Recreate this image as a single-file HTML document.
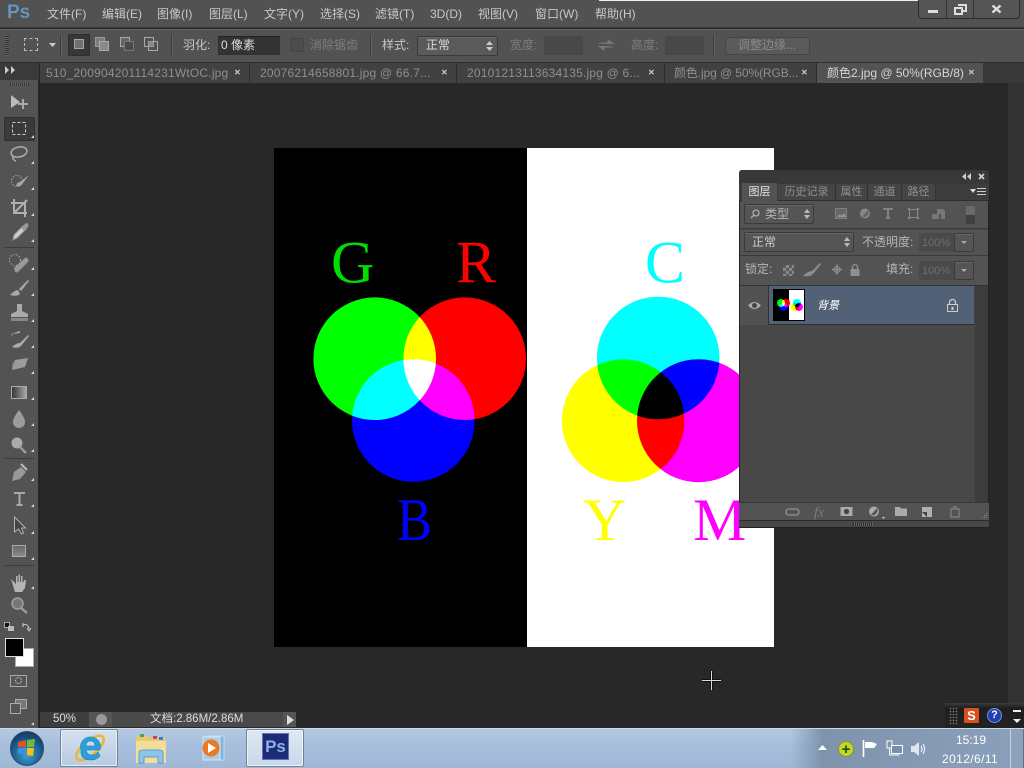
<!DOCTYPE html>
<html><head><meta charset="utf-8"><style>
html,body{margin:0;padding:0;width:1024px;height:768px;overflow:hidden;background:#282828}
*{box-sizing:border-box}
#r{position:relative;width:1024px;height:768px;overflow:hidden;font-family:"Liberation Sans","Noto Sans CJK SC",sans-serif;font-size:12px;color:#c8c8c8}
.a{position:absolute}
.t{position:absolute;white-space:nowrap;line-height:16px}
svg{position:absolute;overflow:visible}
.dim{color:#7d7d7d}
.sep{position:absolute;width:1px;background:#3c3c3c;border-right:1px solid #626262;width:2px}
.tab{position:absolute;top:63px;height:20px;background:#414141;border-right:1px solid #2c2c2c;color:#8f8f8f;line-height:21px;padding-left:6px;white-space:nowrap;font-size:12px;letter-spacing:.2px}
.x{position:absolute;top:-1px;font-size:8px;color:#ccc;font-weight:bold;letter-spacing:0}
.ptab{position:absolute;top:184px;height:16px;color:#8e8e8e;font-size:11px;line-height:16px;text-align:center;background:#454545;border-right:1px solid #333}
.sbox{position:absolute;background:#555;border:1px solid #3a3a3a;border-radius:2px;box-shadow:inset 0 1px 0 #666}
</style></head><body><div id="r">

<!-- title bar -->
<div class="a" style="left:0;top:0;width:1024px;height:28px;background:#525252;border-bottom:1px solid #383838"></div>
<div class="a" style="left:599px;top:0;width:320px;height:1px;background:#eee"></div>
<div class="t" style="left:7px;top:1px;font-size:19px;line-height:24px;font-weight:bold;color:#6a93b8">Ps</div>
<div class="t" style="left:47px;top:6px">文件(F)</div>
<div class="t" style="left:102px;top:6px">编辑(E)</div>
<div class="t" style="left:157px;top:6px">图像(I)</div>
<div class="t" style="left:209px;top:6px">图层(L)</div>
<div class="t" style="left:264px;top:6px">文字(Y)</div>
<div class="t" style="left:320px;top:6px">选择(S)</div>
<div class="t" style="left:375px;top:6px">滤镜(T)</div>
<div class="t" style="left:430px;top:6px">3D(D)</div>
<div class="t" style="left:478px;top:6px">视图(V)</div>
<div class="t" style="left:535px;top:6px">窗口(W)</div>
<div class="t" style="left:595px;top:6px">帮助(H)</div>
<!-- window btns -->
<div class="a" style="left:918px;top:-1px;width:102px;height:20px;background:#555;border:1px solid #2c2c2c;border-radius:0 0 4px 4px"></div>
<div class="a" style="left:946px;top:0;width:1px;height:18px;background:#333"></div>
<div class="a" style="left:973px;top:0;width:1px;height:18px;background:#333"></div>
<div class="a" style="left:928px;top:10px;width:10px;height:3px;background:#ddd"></div>
<svg style="left:954px;top:4px" width="14" height="11"><path d="M4 1h8v6H9M1 4h7v6H1z" fill="none" stroke="#ddd" stroke-width="2"/></svg>
<svg style="left:991px;top:4px" width="12" height="11"><path d="M1.500 1.500l8 7M9.500 1.500l-8 7" stroke="#ddd" stroke-width="2.400" fill="none"/></svg>

<!-- options bar -->
<div class="a" style="left:0;top:29px;width:1024px;height:34px;background:#525252;border-bottom:1px solid #2d2d2d;box-shadow:inset 0 1px 0 #606060"></div>
<div class="a" style="left:5px;top:36px;width:4px;height:20px;background:repeating-linear-gradient(#2f2f2f 0 1px,#666 1px 2px)"></div>
<div class="a" style="left:24px;top:38px;width:14px;height:13px;border:1px dashed #bbb"></div>
<svg style="left:49px;top:43px" width="7" height="4"><path d="M0 0h7L3.500 4z" fill="#ccc"/></svg>
<div class="sep" style="left:60px;top:35px;height:22px"></div>
<div class="a" style="left:68px;top:34px;width:22px;height:22px;background:#373737;border-radius:2px;box-shadow:inset 0 0 0 1px #2e2e2e"></div>
<div class="a" style="left:74px;top:39px;width:10px;height:10px;background:#707070;border:1px solid #a5a5a5"></div>
<svg style="left:95px;top:37px" width="16" height="15"><rect x=".5" y=".5" width="9" height="9" fill="#7c7c7c" stroke="#999"/><rect x="4.500" y="4.500" width="9" height="9" fill="#8a8a8a" stroke="#aaa"/></svg>
<svg style="left:120px;top:37px" width="16" height="15"><rect x=".5" y=".5" width="9" height="9" fill="#666" stroke="#aaa"/><rect x="4.500" y="4.500" width="9" height="9" fill="#4b4b4b" stroke="#777"/></svg>
<svg style="left:144px;top:37px" width="16" height="15"><rect x=".5" y=".5" width="9" height="9" fill="none" stroke="#aaa"/><rect x="4.500" y="4.500" width="9" height="9" fill="none" stroke="#aaa"/><rect x="4.500" y="4.500" width="5" height="5" fill="#888"/></svg>
<div class="sep" style="left:171px;top:35px;height:22px"></div>
<div class="t" style="left:183px;top:37px">羽化:</div>
<div class="a" style="left:218px;top:36px;width:62px;height:19px;background:#333;box-shadow:inset 0 1px 1px #222"></div>
<div class="t" style="left:221px;top:37px;color:#ddd">0 像素</div>
<div class="a" style="left:290px;top:38px;width:14px;height:14px;background:#4c4c4c;border:1px solid #444;border-radius:2px"></div>
<div class="t dim" style="left:310px;top:37px">消除锯齿</div>
<div class="sep" style="left:370px;top:35px;height:22px"></div>
<div class="t" style="left:382px;top:37px">样式:</div>
<div class="sbox" style="left:417px;top:36px;width:81px;height:20px;background:#5a5a5a"></div>
<div class="t" style="left:426px;top:37px;color:#ddd">正常</div>
<svg style="left:486px;top:41px" width="7" height="10"><path d="M0 4l3.500-4L7 4zM0 6l3.500 4L7 6z" fill="#ccc"/></svg>
<div class="t dim" style="left:510px;top:37px">宽度:</div>
<div class="a" style="left:544px;top:36px;width:39px;height:19px;background:#484848"></div>
<svg style="left:598px;top:38px" width="16" height="14"><path d="M1 5h9V2l5 3.500H5M15 9H6v3L1 8.500h10" fill="#777" stroke="#777"/></svg>
<div class="t dim" style="left:631px;top:37px">高度:</div>
<div class="a" style="left:665px;top:36px;width:39px;height:19px;background:#484848"></div>
<div class="sep" style="left:713px;top:35px;height:22px"></div>
<div class="a" style="left:725px;top:37px;width:85px;height:18px;background:#5a5a5a;border:1px solid #454545;border-radius:2px"></div>
<div class="t" style="left:738px;top:37px;color:#8a8a8a">调整边缘...</div>

<!-- tabs -->
<div class="a" style="left:40px;top:63px;width:984px;height:20px;background:#383838"></div>
<div class="tab" style="left:40px;width:210px">510_200904201114231WtOC.jpg<span class="x" style="left:194px">✕</span></div>
<div class="tab" style="left:250px;width:207px;padding-left:10px">20076214658801.jpg @ 66.7...<span class="x" style="left:191px">✕</span></div>
<div class="tab" style="left:457px;width:208px;padding-left:10px">20101213113634135.jpg @ 6...<span class="x" style="left:191px">✕</span></div>
<div class="tab" style="left:665px;width:152px;padding-left:9px;letter-spacing:-.1px">颜色.jpg @ 50%(RGB...<span class="x" style="left:136px">✕</span></div>
<div class="tab" style="left:817px;width:166px;background:#535353;color:#d6d6d6;padding-left:10px;border-right:0;letter-spacing:0">颜色2.jpg @ 50%(RGB/8)<span class="x" style="left:151px">✕</span></div>

<!-- right strip -->
<div class="a" style="left:1007px;top:83px;width:17px;height:628px;background:#333;border-left:1px solid #2a2a2a"></div>

<!-- toolbar -->
<div class="a" style="left:0;top:63px;width:39px;height:17px;background:#3a3a3a"></div>
<svg style="left:5px;top:66px" width="12" height="8"><path d="M0 0l4 4-4 4zM6 0l4 4-4 4z" fill="#ccc"/></svg>
<div class="a" style="left:0;top:80px;width:39px;height:648px;background:#535353;border-right:1px solid #2b2b2b"></div>
<div class="a" style="left:39px;top:63px;width:1px;height:665px;background:#222"></div>
<div class="a" style="left:10px;top:80px;width:19px;height:3px;margin-top:3px;background:repeating-linear-gradient(90deg,#333 0 1px,#666 1px 2px)"></div>
<div class="a" style="left:4px;top:117px;width:31px;height:24px;background:#3a3a3a;border-radius:2px;box-shadow:inset 0 0 0 1px #303030"></div>

<svg style="left:0;top:0" width="40" height="730">
<!-- move -->
<path d="M11 95l9 7-9 6z" fill="#bbb"/><path d="M23 99v10M18 104h10" stroke="#aaa" stroke-width="2"/>
<!-- marquee -->
<rect x="12.500" y="122.500" width="13" height="12" fill="none" stroke="#c8c8c8" stroke-dasharray="3 2"/>
<!-- lasso -->
<ellipse cx="19" cy="152" rx="8" ry="5" transform="rotate(-12 19 152)" fill="none" stroke="#adadad" stroke-width="1.500"/><path d="M13 156q-1 4 3 5" fill="none" stroke="#adadad" stroke-width="1.500"/>
<!-- quick select -->
<circle cx="17" cy="181" r="5.500" fill="none" stroke="#aaa" stroke-dasharray="1.500 1.500"/><path d="M29 175l-9 7q-3 0-4 4 5 1 7-3z" fill="#a8a8a8"/>
<!-- crop -->
<path d="M14 199v14h13M11 203h14v14M27 200l-13 13" fill="none" stroke="#b0b0b0" stroke-width="2"/>
<!-- eyedropper -->
<path d="M14 235l9-9 3 3-9 9-4 2z" fill="#ccc" stroke="#999"/><path d="M21 228l4-4q2-2 3 0t0 3l-4 4z" fill="#999"/>
<line x1="5" x2="34" y1="247.500" y2="247.500" stroke="#3c3c3c"/>
<!-- healing -->
<circle cx="15" cy="260" r="5.500" fill="none" stroke="#aaa" stroke-dasharray="1.500 1.500"/><path d="M14 268l12-11 2 2q1 1 0 3l-10 10q-2 1-3 0z" fill="#999"/>
<!-- brush -->
<path d="M28 280l-9 9 2 2 8-10zM18 290q-3 0-8 5 7 2 10-1z" fill="#aaa"/>
<!-- stamp -->
<path d="M17 304h5v7l6 3v3H11v-3l6-3z" fill="#aaa"/><rect x="11" y="318" width="17" height="3" fill="#888"/>
<!-- history brush -->
<path d="M12 334l8-1v-2l-9 3 3 4zM28 335l-8 8q-4 0-8 4 6 2 9-1l8-10z" fill="#aaa"/>
<!-- eraser -->
<path d="M15 360l13-2-3 9-13 3z" fill="#9c9c9c"/><path d="M12 370l3-10-3 4z" fill="#808080"/>
<!-- gradient -->
<defs><linearGradient id="g1"><stop offset="0" stop-color="#333"/><stop offset="1" stop-color="#aaa"/></linearGradient><linearGradient id="g2" x2="0" y2="1"><stop offset="0" stop-color="#666"/><stop offset="1" stop-color="#8c8c8c"/></linearGradient></defs>
<rect x="11.500" y="386.500" width="15" height="12" fill="url(#g1)" stroke="#aaa"/>
<!-- drop -->
<path d="M19 410q6 8 6 12a6 6 0 0 1-12 0q0-4 6-12z" fill="#9c9c9c"/>
<!-- dodge -->
<circle cx="17" cy="443" r="5.500" fill="#aaa"/><path d="M20 447l6 6" stroke="#999" stroke-width="2.500"/>
<line x1="5" x2="34" y1="458.500" y2="458.500" stroke="#3c3c3c"/>
<!-- pen -->
<path d="M12 481l2-9 7-5 5 5-6 7z" fill="#999"/><path d="M21 464l6 6" stroke="#bbb" stroke-width="2"/>
<!-- T -->
<path d="M14 493h11M19.500 493v12M16.500 505h6" stroke="#aaa" stroke-width="2" fill="none"/>
<!-- direct select -->
<path d="M14.500 517v15l4-3 3 5 2-1-2-5h4z" fill="#444" stroke="#b4b4b4"/>
<!-- rect -->
<rect x="12.500" y="545.500" width="13" height="11" fill="url(#g2)" stroke="#aaa"/>
<line x1="5" x2="34" y1="565.500" y2="565.500" stroke="#3c3c3c"/>
<!-- hand -->
<path d="M11 579l5 5v-8h1.500v6h1v-7.500H20v7.500h1v-6h1.500v7l2-3h1.500l-1 8-3 4H15z" fill="#b4b4b4"/>
<!-- zoom -->
<circle cx="17.500" cy="603.500" r="5.500" fill="#777" stroke="#a0a0a0" stroke-width="1.500"/><path d="M21 608l6 5" stroke="#999" stroke-width="2.500"/>
</svg>
<!-- little triangles -->
<svg style="left:0;top:0" width="40" height="730"><g fill="#ddd">
<path d="M31 138h3v-3zM31 164h3v-3zM31 190h3v-3zM31 216h3v-3zM31 242h3v-3zM31 270h3v-3zM31 296h3v-3zM31 322h3v-3zM31 348h3v-3zM31 374h3v-3zM31 400h3v-3zM31 426h3v-3zM31 452h3v-3zM31 481h3v-3zM31 507h3v-3zM31 534h3v-3zM31 560h3v-3zM31 589h3v-3zM31 725h3v-3z"/></g>
<rect x="4.500" y="622.500" width="5" height="5" fill="#111" stroke="#aaa"/><rect x="8" y="626" width="6" height="5" fill="#bbb"/>
<path d="M23 625q5-2 6 4M23 623v4M27 628l2 3 2-3" fill="none" stroke="#ccc"/>
</svg>
<div class="a" style="left:15px;top:648px;width:19px;height:19px;background:#fff;border:1px solid #aaa"></div>
<div class="a" style="left:5px;top:638px;width:19px;height:19px;background:#000;border:1px solid #ddd"></div>
<div class="a" style="left:10px;top:675px;width:17px;height:12px;background:#555;border:1px solid #aaa"></div>
<div class="a" style="left:15px;top:677px;width:7px;height:7px;border:1px dotted #ddd;border-radius:50%"></div>
<svg style="left:0;top:0" width="40" height="730"><rect x="15.500" y="699.500" width="11" height="9" fill="#777" stroke="#aaa"/><rect x="10.500" y="703.500" width="10" height="10" fill="#555" stroke="#aaa"/></svg>

<!-- canvas image -->
<div class="a" style="left:274px;top:148px;width:253px;height:499px;background:#000"></div>
<div class="a" style="left:527px;top:148px;width:247px;height:499px;background:#fff"></div>
<svg style="left:0;top:0" width="1024" height="768">
<g style="isolation:isolate">
<circle cx="374.700" cy="358.700" r="61.300" fill="#0f0" style="mix-blend-mode:screen"/>
<circle cx="464.700" cy="358.700" r="61.300" fill="#f00" style="mix-blend-mode:screen"/>
<circle cx="413.300" cy="420.500" r="61.300" fill="#00f" style="mix-blend-mode:screen"/>
</g>
<g style="isolation:isolate">
<circle cx="658.200" cy="358" r="61.300" fill="#0ff" style="mix-blend-mode:multiply"/>
<circle cx="623.200" cy="420.700" r="61.300" fill="#ff0" style="mix-blend-mode:multiply"/>
<circle cx="698.500" cy="420.700" r="61.500" fill="#f0f" style="mix-blend-mode:multiply"/>
</g>
<g font-family="Liberation Serif,serif" font-size="60">
<text x="331" y="282.500" fill="#0d0">G</text>
<text x="456" y="282.500" fill="#f00">R</text>
<text x="397" y="540" fill="#00f" textLength="35" lengthAdjust="spacingAndGlyphs">B</text>
<text x="645" y="282.500" fill="#0ff">C</text>
<text x="583" y="540" fill="#ff0">Y</text>
<text x="693" y="540" fill="#f0f">M</text>
</g>
</svg>

<!-- layers panel -->
<div class="a" style="left:739px;top:170px;width:250px;height:358px;background:#474747;border:1px solid #222;border-top:0;border-radius:3px 3px 0 0"></div>
<div class="a" style="left:739px;top:170px;width:250px;height:14px;background:#383838;border-radius:3px 3px 0 0"></div>
<svg style="left:961px;top:173px" width="26" height="8"><path d="M5 0v7L1 3.500zM10 0v7L6 3.500z" fill="#ccc"/><path d="M18 1l5 5M23 1l-5 5" stroke="#ccc" stroke-width="1.800"/></svg>
<div class="a" style="left:739px;top:184px;width:250px;height:17px;background:#3d3d3d;border-bottom:1px solid #2e2e2e"></div>
<div class="ptab" style="left:742px;width:35px;top:183px;height:18px;background:#535353;color:#e4e4e4;line-height:18px;border:0">图层</div>
<div class="ptab" style="left:778px;width:58px">历史记录</div>
<div class="ptab" style="left:836px;width:32px">属性</div>
<div class="ptab" style="left:868px;width:34px">通道</div>
<div class="ptab" style="left:902px;width:34px">路径</div>
<svg style="left:970px;top:187px" width="16" height="9"><path d="M0 2h6L3 6z" fill="#ddd"/><path d="M7 1.500h9M7 4.500h9M7 7.500h9" stroke="#ccc"/></svg>
<!-- filter row -->
<div class="a" style="left:740px;top:201px;width:248px;height:28px;background:#535353;border-bottom:1px solid #3a3a3a"></div>
<div class="sbox" style="left:744px;top:204px;width:70px;height:20px"></div>
<svg style="left:750px;top:209px" width="10" height="10"><circle cx="6" cy="4" r="3" fill="none" stroke="#aaa" stroke-width="1.300"/><path d="M4 6L1 9" stroke="#aaa" stroke-width="1.300"/></svg>
<div class="t" style="left:765px;top:206px;color:#b5b5b5">类型</div>
<svg style="left:804px;top:209px" width="6" height="10"><path d="M0 4l3-4 3 4zM0 6l3 4 3-4z" fill="#bbb"/></svg>
<svg style="left:835px;top:207px" width="150" height="18">
<rect x=".5" y="1.500" width="11" height="10" fill="#666" stroke="#808080"/><path d="M2 10l3-3 2 2 2-3 2 4z" fill="#999"/>
<circle cx="30" cy="6.500" r="5" fill="#888"/><path d="M27 10l6-7a5 5 0 0 1-6 7z" fill="#666"/>
<path d="M48 2h10M53 2v9M51 11h4" stroke="#888" stroke-width="1.800" fill="none"/>
<rect x="74.500" y="2.500" width="8" height="8" fill="none" stroke="#888"/><path d="M73 1h2v2h-2zM82 1h2v2h-2zM73 10h2v2h-2zM82 10h2v2h-2z" fill="#888"/>
<path d="M102 2h6l2 2v8h-4V7h-4zM97 7h7v5h-7z" fill="#777"/>
<rect x="131" y="-1" width="9" height="9" fill="#6a6a6a"/><rect x="131" y="8" width="9" height="9" fill="#3f3f3f"/>
</svg>
<!-- blend row -->
<div class="a" style="left:740px;top:230px;width:248px;height:26px;background:#535353;border-bottom:1px solid #3a3a3a"></div>
<div class="sbox" style="left:744px;top:232px;width:110px;height:20px"></div>
<div class="t" style="left:752px;top:234px;color:#ccc">正常</div>
<svg style="left:844px;top:237px" width="6" height="10"><path d="M0 4l3-4 3 4zM0 6l3 4 3-4z" fill="#bbb"/></svg>
<div class="t" style="left:862px;top:234px;color:#b5b5b5">不透明度:</div>
<div class="a" style="left:919px;top:233px;width:35px;height:19px;background:#4a4a4a"></div>
<div class="t" style="left:922px;top:235px;font-size:11px;color:#6e6e6e">100%</div>
<div class="sbox" style="left:954px;top:233px;width:20px;height:19px"></div>
<svg style="left:961px;top:241px" width="6" height="3"><path d="M0 0h6L3 3z" fill="#aaa"/></svg>
<!-- lock row -->
<div class="a" style="left:740px;top:256px;width:248px;height:30px;background:#535353;border-bottom:1px solid #333"></div>
<div class="t" style="left:745px;top:261px;color:#b5b5b5">锁定:</div>
<div class="a" style="left:783px;top:265px;width:11px;height:11px;background:repeating-conic-gradient(#888 0 25%,#5c5c5c 0 50%) 0 0/6px 6px"></div>
<svg style="left:803px;top:262px" width="60" height="16"><path d="M17 1l-8 8q-4 0-9 5 7 1 10-2l8-10z" fill="#8f8f8f"/><path d="M29 7.500h10M34 2.500v10" stroke="#8f8f8f" stroke-width="1.600"/><circle cx="34" cy="7.500" r="3" fill="none" stroke="#8f8f8f"/><rect x="47.500" y="7" width="9" height="7" fill="#8f8f8f"/><path d="M49.500 7V5a2.500 2.500 0 0 1 5 0v2" fill="none" stroke="#8f8f8f" stroke-width="1.300"/></svg>
<div class="t" style="left:886px;top:261px;color:#b5b5b5">填充:</div>
<div class="a" style="left:919px;top:261px;width:35px;height:19px;background:#4a4a4a"></div>
<div class="t" style="left:922px;top:263px;font-size:11px;color:#6e6e6e">100%</div>
<div class="sbox" style="left:954px;top:261px;width:20px;height:19px"></div>
<svg style="left:961px;top:269px" width="6" height="3"><path d="M0 0h6L3 3z" fill="#aaa"/></svg>
<!-- layer -->
<div class="a" style="left:740px;top:286px;width:234px;height:39px;background:#536176;border-bottom:1px solid #2f2f2f"></div>
<div class="a" style="left:740px;top:286px;width:29px;height:39px;background:#525252;border-right:1px solid #333"></div>
<div class="a" style="left:740px;top:325px;width:234px;height:177px;background:#484848"></div>
<div class="a" style="left:975px;top:286px;width:13px;height:216px;background:#3c3c3c"></div>
<svg style="left:748px;top:300px" width="14" height="11"><path d="M0 5.500q6.500-7 13 0-6.500 7-13 0z" fill="#aaa"/><circle cx="6.500" cy="5.500" r="2.500" fill="#444"/></svg>
<div class="a" style="left:773px;top:289px;width:32px;height:32px;background:#000;border:1px solid #000"></div>
<div class="a" style="left:789px;top:290px;width:15px;height:30px;background:#fff"></div>
<svg style="left:773px;top:289px" width="32" height="32"><g style="isolation:isolate"><circle cx="8" cy="14" r="4" fill="#0f0" style="mix-blend-mode:screen"/><circle cx="13" cy="14" r="4" fill="#f00" style="mix-blend-mode:screen"/><circle cx="10.500" cy="18" r="4" fill="#00f" style="mix-blend-mode:screen"/></g><g style="isolation:isolate"><circle cx="24" cy="14" r="4" fill="#0ff" style="mix-blend-mode:multiply"/><circle cx="22" cy="18" r="4" fill="#ff0" style="mix-blend-mode:multiply"/><circle cx="26" cy="18" r="4" fill="#f0f" style="mix-blend-mode:multiply"/></g></svg>
<div class="t" style="left:817px;top:298px;font-size:11px;color:#fff;font-style:italic">背景</div>
<svg style="left:947px;top:299px" width="11" height="13"><rect x=".5" y="5.500" width="10" height="7" fill="none" stroke="#ccc"/><path d="M2.500 5V3.500a3 3 0 0 1 6 0V5" fill="none" stroke="#ccc" stroke-width="1.300"/><rect x="4.500" y="8" width="2" height="3" fill="#ccc"/></svg>
<!-- panel bottom -->
<div class="a" style="left:739px;top:502px;width:250px;height:19px;background:#535353;border-top:1px solid #383838;border-bottom:1px solid #2b2b2b"></div>
<div class="a" style="left:739px;top:521px;width:250px;height:7px;background:#474747;border-bottom:1px solid #222"></div>
<div class="a" style="left:853px;top:523px;width:20px;height:3px;background:repeating-linear-gradient(90deg,#2a2a2a 0 1px,#666 1px 2px)"></div>
<svg style="left:739px;top:502px" width="250" height="19">
<rect x="47" y="7" width="13" height="6" rx="3" fill="none" stroke="#888" stroke-width="1.600"/>
<text x="75" y="14.500" font-family="Liberation Serif,serif" font-style="italic" font-size="14" fill="#7c7c7c">fx</text>
<rect x="101.500" y="5" width="12" height="9" fill="#aaa"/><circle cx="107.500" cy="9.500" r="2.600" fill="#444"/>
<circle cx="135" cy="9.500" r="5" fill="#aaa"/><path d="M132 13l6-7a5 5 0 0 1-6 7z" fill="#555"/><path d="M143 15h3l-1.500 2z" fill="#ccc"/>
<path d="M156 5h5l1 1.500h6V14h-12z" fill="#aaa"/>
<path d="M183 5h10v10h-10z" fill="#b0b0b0"/><path d="M183 10h5v5z" fill="#444"/>
<path d="M211 7h10M214 5h4M212 8v7h8V8" fill="none" stroke="#7c7c7c" stroke-width="1.400"/>
<path d="M243 16h1v-1h-1zM245 16h1v-1h-1zM247 16h1v-1h-1zM245 14h1v-1h-1zM247 14h1v-1h-1zM247 12h1v-1h-1z" fill="#888"/>
</svg>

<!-- cursor -->
<svg style="left:701px;top:670px" width="21" height="21"><path d="M10.500 1v19M1 10.500h19" stroke="#111" stroke-width="3"/><path d="M10.500 1v19M1 10.500h19" stroke="#ddd" stroke-width="1"/></svg>

<!-- status bar -->
<div class="a" style="left:40px;top:711px;width:984px;height:17px;background:#282828"></div>
<div class="a" style="left:40px;top:712px;width:256px;height:15px;background:#3e3e3e"></div>
<div class="a" style="left:112px;top:712px;width:172px;height:15px;background:#4a4a4a"></div>
<div class="t" style="left:53px;top:711px;color:#ddd;font-size:11.500px">50%</div>
<div class="a" style="left:89px;top:712px;width:23px;height:15px;background:#555"></div>
<div class="a" style="left:96px;top:714px;width:11px;height:11px;border-radius:50%;background:#999"></div>
<div class="t" style="left:150px;top:711px;color:#ddd;font-size:11.500px">文档:2.86M/2.86M</div>
<div class="a" style="left:283px;top:712px;width:13px;height:15px;background:#555"></div>
<svg style="left:287px;top:715px" width="7" height="10"><path d="M0 0l7 5-7 5z" fill="#ddd"/></svg>

<!-- corner widget -->
<div class="a" style="left:945px;top:703px;width:79px;height:25px;background:linear-gradient(#3c3c3c,#1e1e1e 20%,#222)"></div>
<div class="a" style="left:949px;top:707px;width:9px;height:18px;background:radial-gradient(#777 35%,transparent 40%) 0 0/3px 3px"></div>
<div class="a" style="left:964px;top:708px;width:15px;height:15px;background:#d8511c;color:#fff;font-weight:bold;font-size:13px;line-height:15px;text-align:center;border-radius:1px">S</div>
<div class="a" style="left:987px;top:708px;width:15px;height:15px;background:#1f3eb0;border:1px solid #7f92d8;border-radius:50%;color:#fff;font-weight:bold;font-size:11px;line-height:13px;text-align:center">?</div>
<div class="a" style="left:1013px;top:710px;width:8px;height:2px;background:#eee"></div>
<svg style="left:1013px;top:719px" width="8" height="4"><path d="M0 0h8L4 4z" fill="#eee"/></svg>

<!-- taskbar -->
<div class="a" style="left:0;top:728px;width:1024px;height:40px;background:linear-gradient(#b5c9e2,#a7bfdc 40%,#9fb8d6);border-top:1px solid #ccd9ea"></div>
<div class="a" style="left:790px;top:729px;width:234px;height:39px;background:linear-gradient(90deg,rgba(130,148,172,0),#7f93ad 14%,#8ba0ba)"></div>
<div class="a" style="left:1010px;top:729px;width:14px;height:39px;background:#8ea2bc;border-left:1px solid #c5d2e2;border-right:1px solid #5f728a"></div>
<!-- start orb -->
<div class="a" style="left:10px;top:731px;width:34px;height:35px;border-radius:50%;background:radial-gradient(circle at 50% 70%,#3aa0d0,#16527f 60%,#0c2c4c);border:1px solid #2d4a68"></div>
<svg style="left:17px;top:739px" width="20" height="19"><path d="M1 3l8-2v7H1z" fill="#e0532a"/><path d="M10 1l8-1-1 8h-7z" fill="#74b83a"/><path d="M1 9h8v7l-9-2z" fill="#3f8fe0"/><path d="M10 9h7l-1 8-6-1z" fill="#f1c21f"/></svg>
<!-- IE -->
<div class="a" style="left:60px;top:729px;width:58px;height:38px;background:linear-gradient(#d5e0ee,#b8cbe1);border:1px solid #6f8399;border-radius:2px;box-shadow:inset 0 0 0 1px #e8eef6"></div>
<svg style="left:72px;top:730px" width="36" height="36"><ellipse cx="18" cy="18" rx="17" ry="7" transform="rotate(-40 18 18)" fill="none" stroke="#e8b830" stroke-width="2.500"/><path d="M9 20a10 10 0 1 1 19 0H14q1 5 6 5 4 0 6-3l2 4q-4 4-9 4-11 0-10-10zM14 16h9q0-5-4.500-5T14 16z" fill="#2a9fd8" stroke="#1a7fb8" stroke-width=".6"/></svg>
<!-- explorer -->
<svg style="left:135px;top:733px" width="32" height="32"><path d="M1 3h12l3 2h14v8H1z" fill="#e6c978"/><rect x="5" y="1" width="4" height="3" fill="#4aa84a"/><rect x="18" y="3" width="4" height="3" fill="#c84c3c"/><rect x="24" y="4" width="4" height="3" fill="#3c7cc8"/><path d="M1 8h30v22H1z" fill="#f3dd9a"/><path d="M4 30V20q0-3 4-3h16q4 0 4 3v10h-5v-6H9v6z" fill="#8cc4ea" stroke="#5a9fcc"/></svg>
<!-- media -->
<svg style="left:199px;top:735px" width="28" height="27"><rect x="8" y="1" width="17" height="24" fill="#86b4d8" stroke="#c8dcee"/><rect x="4" y="2" width="17" height="23" fill="#a8cce6" stroke="#d8e6f2"/><circle cx="12" cy="13" r="8.500" fill="#ea7a22"/><path d="M9 8l8 5-8 5z" fill="#fff"/></svg>
<!-- ps -->
<div class="a" style="left:246px;top:729px;width:58px;height:38px;background:linear-gradient(#e0e8f2,#c8d8ea);border:1px solid #6f8399;border-radius:2px;box-shadow:inset 0 0 0 1px #eef3f9"></div>
<div class="a" style="left:262px;top:733px;width:27px;height:27px;background:#1c2a78;border:1px solid #5f77b0;color:#8fb2e6;font-weight:bold;font-size:17px;line-height:25px;text-align:center">Ps</div>
<!-- tray -->
<svg style="left:818px;top:745px" width="9" height="5"><path d="M0 5l4.500-5L9 5z" fill="#fff"/></svg>
<div class="a" style="left:838px;top:741px;width:16px;height:16px;border-radius:50%;background:#c7d52a;color:#1a4d10;font-weight:bold;font-size:15px;line-height:15px;text-align:center;border:1px solid #7a9a20">+</div>
<svg style="left:862px;top:740px" width="18" height="18"><path d="M1.500 0v17" stroke="#fff" stroke-width="1.600"/><path d="M3 2h7l5 2-3 4H3z" fill="#fff"/></svg>
<svg style="left:886px;top:741px" width="18" height="16"><rect x="1" y="0" width="5" height="7" fill="none" stroke="#fff"/><rect x="5.500" y="4.500" width="11" height="8" fill="#7a8ea8" stroke="#fff"/><path d="M3.500 7v7h10" stroke="#fff" fill="none"/></svg>
<svg style="left:910px;top:741px" width="16" height="16"><path d="M1 5h3l5-4v14l-5-4H1z" fill="#dfe6ef"/><path d="M11 5q2 3 0 6M13 3q3 5 0 10" fill="none" stroke="#fff"/></svg>
<div class="t" style="left:956px;top:732px;color:#fff;font-size:12px">15:19</div>
<div class="t" style="left:942px;top:751px;color:#fff;font-size:12px;letter-spacing:.4px">2012/6/11</div>

</div></body></html>
